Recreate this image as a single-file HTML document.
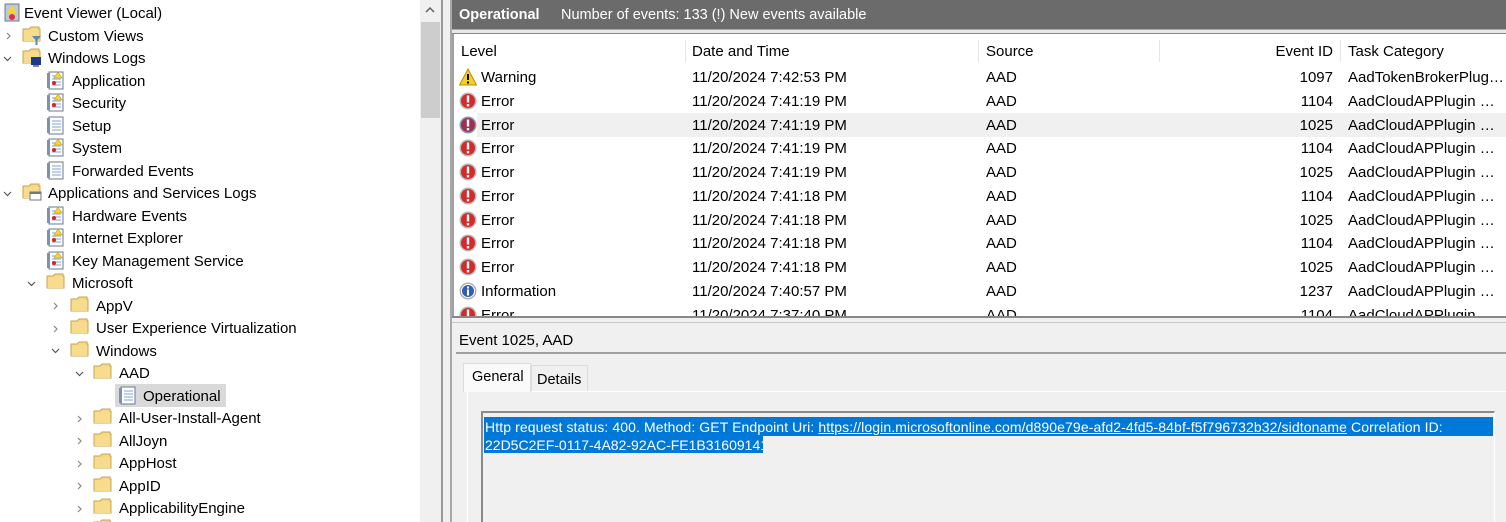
<!DOCTYPE html>
<html><head><meta charset="utf-8">
<style>
*{margin:0;padding:0;box-sizing:border-box}
body{width:1506px;height:522px;overflow:hidden;position:relative;background:#fff;font-family:"Liberation Sans",Arial,sans-serif;font-size:15px;color:#000}
.a{position:absolute;white-space:nowrap;padding-top:1px}
.t{position:absolute;white-space:nowrap;line-height:22px;height:23px;padding-top:1px}
.k{width:157px;overflow:hidden;text-overflow:ellipsis}
svg{position:absolute}
</style></head><body>

<!-- left tree -->
<div class="a" style="left:0;top:0;width:420px;height:522px;background:#fff"></div>
<div class="a" style="left:115px;top:384px;width:111px;height:23px;background:#d9d9d9"></div>
<!-- scrollbar -->
<div class="a" style="left:420px;top:0;width:21px;height:522px;background:#f0f0f0"></div>
<div class="a" style="left:421px;top:22px;width:19px;height:96px;background:#cdcdcd"></div>
<svg style="left:424px;top:5px" width="12" height="10"><polyline points="2,7 6,3 10,7" fill="none" stroke="#606060" stroke-width="1.5"/></svg>
<div class="a" style="left:441px;top:0;width:2px;height:522px;background:#9a9a9a"></div>
<div class="a" style="left:443px;top:0;width:9px;height:522px;background:#f0f0f0"></div>
<div class="a" style="left:450px;top:0;width:2px;height:522px;background:#a8a8a8"></div>

<svg width="0" height="0" style="position:absolute">
<defs>
<g id="fold"><path d="M1,3 h6 l2,-2 h8 v2 h1 v12 h-17z" fill="#f6d886" stroke="#c8a54c"/><rect x="1.5" y="4" width="16" height="11" fill="#f8dc8e"/></g>
<g id="log"><rect x="3" y="1" width="14" height="17" fill="#fff" stroke="#6a7a96"/><rect x="1" y="2" width="3" height="15" fill="#8090b0"/><line x1="6" y1="5" x2="15" y2="5" stroke="#7fa0d0"/><line x1="6" y1="8" x2="15" y2="8" stroke="#7fa0d0"/><line x1="6" y1="11" x2="15" y2="11" stroke="#7fa0d0"/><line x1="6" y1="14" x2="15" y2="14" stroke="#7fa0d0"/></g>
<g id="wlog"><use href="#log"/><path d="M12,1 l4,6 h-8z" fill="#f7d43a" stroke="#c9a000" stroke-width=".6"/><circle cx="8" cy="12" r="2" fill="#d22"/></g>
<g id="cr"><polyline points="2,2 5,5 2,8" fill="none" stroke="#888" stroke-width="1.2"/></g>
<g id="cd"><polyline points="1,3 4.5,6.5 8,3" fill="none" stroke="#555" stroke-width="1.2"/></g>
<g id="err"><circle cx="9" cy="9" r="8.5" fill="#b8b8b8"/><circle cx="9" cy="9" r="7" fill="#d42a2a"/><rect x="7.8" y="3.5" width="2.4" height="7" fill="#fff"/><rect x="7.8" y="12" width="2.4" height="2.4" fill="#fff"/></g>
<g id="errs"><circle cx="9" cy="9" r="8.5" fill="#8a9ab8"/><circle cx="9" cy="9" r="7" fill="#a03050"/><rect x="7.8" y="3.5" width="2.4" height="7" fill="#fff"/><rect x="7.8" y="12" width="2.4" height="2.4" fill="#fff"/></g>
<g id="wrn"><path d="M9,1 L17.5,17 H0.5Z" fill="#f5d020" stroke="#b89000"/><rect x="8" y="6" width="2" height="6" fill="#000"/><rect x="8" y="13.5" width="2" height="2" fill="#000"/></g>
<g id="inf"><circle cx="9" cy="9" r="8.5" fill="#b0b0b0"/><circle cx="9" cy="9" r="7" fill="#fff"/><circle cx="9" cy="9" r="6" fill="#3060b0"/><rect x="8" y="7.5" width="2" height="6" fill="#fff"/><rect x="8" y="4.5" width="2" height="2" fill="#fff"/></g>
</defs></svg>

<!-- tree rows -->
<svg style="left:2px;top:3px" width="20" height="20"><rect x="3" y="1" width="14" height="17" fill="#c0c8d8" stroke="#6a7a96"/><path d="M10,2 l5,8 h-10z" fill="#f7d43a"/><circle cx="10" cy="14" r="3" fill="#d33"/></svg>
<div class="t" style="left:24px;top:2px">Event Viewer (Local)</div>

<svg style="left:5px;top:31px" width="10" height="10"><use href="#cr"/></svg>
<svg style="left:22px;top:26px" width="20" height="20"><use href="#fold"/><path d="M10,10 h9 l-3.5,4 v5 h-2 v-5z" fill="#5a8ab0"/></svg>
<div class="t" style="left:48px;top:25px">Custom Views</div>

<svg style="left:3px;top:54px" width="10" height="10"><use href="#cd"/></svg>
<svg style="left:22px;top:48px" width="22" height="20"><use href="#fold"/><rect x="9" y="9" width="10" height="8" fill="#1a3a90"/><rect x="11" y="17" width="6" height="2" fill="#888"/></svg>
<div class="t" style="left:48px;top:47px">Windows Logs</div>

<svg style="left:46px;top:71px" width="20" height="20"><use href="#wlog"/></svg><div class="t" style="left:72px;top:70px">Application</div>
<svg style="left:46px;top:93px" width="20" height="20"><use href="#wlog"/></svg><div class="t" style="left:72px;top:92px">Security</div>
<svg style="left:46px;top:116px" width="20" height="20"><use href="#log"/></svg><div class="t" style="left:72px;top:115px">Setup</div>
<svg style="left:46px;top:138px" width="20" height="20"><use href="#wlog"/></svg><div class="t" style="left:72px;top:137px">System</div>
<svg style="left:46px;top:161px" width="20" height="20"><use href="#log"/></svg><div class="t" style="left:72px;top:160px">Forwarded Events</div>

<svg style="left:3px;top:189px" width="10" height="10"><use href="#cd"/></svg>
<svg style="left:22px;top:183px" width="22" height="20"><use href="#fold"/><rect x="8" y="9" width="11" height="8" fill="#fff" stroke="#777"/><rect x="8" y="9" width="11" height="2" fill="#777"/></svg>
<div class="t" style="left:48px;top:182px">Applications and Services Logs</div>

<svg style="left:46px;top:206px" width="20" height="20"><use href="#wlog"/></svg><div class="t" style="left:72px;top:205px">Hardware Events</div>
<svg style="left:46px;top:228px" width="20" height="20"><use href="#wlog"/></svg><div class="t" style="left:72px;top:227px">Internet Explorer</div>
<svg style="left:46px;top:251px" width="20" height="20"><use href="#wlog"/></svg><div class="t" style="left:72px;top:250px">Key Management Service</div>

<svg style="left:27px;top:279px" width="10" height="10"><use href="#cd"/></svg>
<svg style="left:46px;top:273px" width="20" height="20"><use href="#fold"/></svg><div class="t" style="left:72px;top:272px">Microsoft</div>

<svg style="left:52px;top:301px" width="10" height="10"><use href="#cr"/></svg>
<svg style="left:70px;top:296px" width="20" height="20"><use href="#fold"/></svg><div class="t" style="left:96px;top:295px">AppV</div>
<svg style="left:52px;top:324px" width="10" height="10"><use href="#cr"/></svg>
<svg style="left:70px;top:318px" width="20" height="20"><use href="#fold"/></svg><div class="t" style="left:96px;top:317px">User Experience Virtualization</div>
<svg style="left:51px;top:346px" width="10" height="10"><use href="#cd"/></svg>
<svg style="left:70px;top:341px" width="20" height="20"><use href="#fold"/></svg><div class="t" style="left:96px;top:340px">Windows</div>

<svg style="left:75px;top:369px" width="10" height="10"><use href="#cd"/></svg>
<svg style="left:93px;top:363px" width="20" height="20"><use href="#fold"/></svg><div class="t" style="left:119px;top:362px">AAD</div>
<svg style="left:118px;top:386px" width="20" height="20"><use href="#log"/></svg><div class="t" style="left:143px;top:385px">Operational</div>

<svg style="left:76px;top:414px" width="10" height="10"><use href="#cr"/></svg><svg style="left:93px;top:408px" width="20" height="20"><use href="#fold"/></svg><div class="t" style="left:119px;top:407px">All-User-Install-Agent</div>
<svg style="left:76px;top:436px" width="10" height="10"><use href="#cr"/></svg><svg style="left:93px;top:431px" width="20" height="20"><use href="#fold"/></svg><div class="t" style="left:119px;top:430px">AllJoyn</div>
<svg style="left:76px;top:459px" width="10" height="10"><use href="#cr"/></svg><svg style="left:93px;top:453px" width="20" height="20"><use href="#fold"/></svg><div class="t" style="left:119px;top:452px">AppHost</div>
<svg style="left:76px;top:481px" width="10" height="10"><use href="#cr"/></svg><svg style="left:93px;top:476px" width="20" height="20"><use href="#fold"/></svg><div class="t" style="left:119px;top:475px">AppID</div>
<svg style="left:76px;top:504px" width="10" height="10"><use href="#cr"/></svg><svg style="left:93px;top:498px" width="20" height="20"><use href="#fold"/></svg><div class="t" style="left:119px;top:497px">ApplicabilityEngine</div>
<svg style="left:93px;top:519px" width="20" height="3"><use href="#fold"/></svg>

<!-- right header bar -->
<div class="a" style="left:452px;top:0;width:1054px;height:29px;background:#6b6b6b"></div>
<div class="a" style="left:459px;top:6px;font-weight:bold;color:#fff;font-size:14.5px">Operational</div>
<div class="a" style="left:561px;top:6px;color:#fff;font-size:14.5px">Number of events: 133 (!) New events available</div>
<div class="a" style="left:452px;top:29px;width:1054px;height:5px;background:#e8e8e8;border-top:1px solid #aaa;border-bottom:1px solid #888;padding:0"></div>

<!-- list -->
<div class="a" style="left:452px;top:34px;width:1054px;height:283px;background:#fff;border-left:2px solid #a0a0a0"></div>
<div class="a" style="left:685px;top:40px;width:1px;height:22px;background:#e5e5e5"></div>
<div class="a" style="left:978px;top:40px;width:1px;height:22px;background:#e5e5e5"></div>
<div class="a" style="left:1159px;top:40px;width:1px;height:22px;background:#e5e5e5"></div>
<div class="a" style="left:1340px;top:40px;width:1px;height:22px;background:#e5e5e5"></div>
<div class="a" style="left:461px;top:42px">Level</div>
<div class="a" style="left:692px;top:42px">Date and Time</div>
<div class="a" style="left:986px;top:42px">Source</div>
<div class="a" style="left:1233px;top:42px;width:100px;text-align:right">Event ID</div>
<div class="a" style="left:1348px;top:42px">Task Category</div>

<div class="a" style="left:477px;top:113px;width:1029px;height:24px;background:#f0f0f0"></div>
<div class="a" style="left:452px;top:316px;width:1054px;height:2px;background:#888"></div>

<!-- rows -->
<svg style="left:459px;top:68px" width="18" height="18"><use href="#wrn"/></svg><div class="a" style="left:481px;top:68px">Warning</div><div class="a" style="left:692px;top:68px">11/20/2024 7:42:53 PM</div><div class="a" style="left:986px;top:68px">AAD</div><div class="a" style="left:1233px;top:68px;width:100px;text-align:right">1097</div><div class="a k" style="left:1348px;top:68px">AadTokenBrokerPlugin Operational</div>
<svg style="left:459px;top:92px" width="18" height="18"><use href="#err"/></svg><div class="a" style="left:481px;top:92px">Error</div><div class="a" style="left:692px;top:92px">11/20/2024 7:41:19 PM</div><div class="a" style="left:986px;top:92px">AAD</div><div class="a" style="left:1233px;top:92px;width:100px;text-align:right">1104</div><div class="a k" style="left:1348px;top:92px">AadCloudAPPlugin Operation</div>
<svg style="left:459px;top:116px" width="18" height="18"><use href="#errs"/></svg><div class="a" style="left:481px;top:116px">Error</div><div class="a" style="left:692px;top:116px">11/20/2024 7:41:19 PM</div><div class="a" style="left:986px;top:116px">AAD</div><div class="a" style="left:1233px;top:116px;width:100px;text-align:right">1025</div><div class="a k" style="left:1348px;top:116px">AadCloudAPPlugin Operation</div>
<svg style="left:459px;top:139px" width="18" height="18"><use href="#err"/></svg><div class="a" style="left:481px;top:139px">Error</div><div class="a" style="left:692px;top:139px">11/20/2024 7:41:19 PM</div><div class="a" style="left:986px;top:139px">AAD</div><div class="a" style="left:1233px;top:139px;width:100px;text-align:right">1104</div><div class="a k" style="left:1348px;top:139px">AadCloudAPPlugin Operation</div>
<svg style="left:459px;top:163px" width="18" height="18"><use href="#err"/></svg><div class="a" style="left:481px;top:163px">Error</div><div class="a" style="left:692px;top:163px">11/20/2024 7:41:19 PM</div><div class="a" style="left:986px;top:163px">AAD</div><div class="a" style="left:1233px;top:163px;width:100px;text-align:right">1025</div><div class="a k" style="left:1348px;top:163px">AadCloudAPPlugin Operation</div>
<svg style="left:459px;top:187px" width="18" height="18"><use href="#err"/></svg><div class="a" style="left:481px;top:187px">Error</div><div class="a" style="left:692px;top:187px">11/20/2024 7:41:18 PM</div><div class="a" style="left:986px;top:187px">AAD</div><div class="a" style="left:1233px;top:187px;width:100px;text-align:right">1104</div><div class="a k" style="left:1348px;top:187px">AadCloudAPPlugin Operation</div>
<svg style="left:459px;top:211px" width="18" height="18"><use href="#err"/></svg><div class="a" style="left:481px;top:211px">Error</div><div class="a" style="left:692px;top:211px">11/20/2024 7:41:18 PM</div><div class="a" style="left:986px;top:211px">AAD</div><div class="a" style="left:1233px;top:211px;width:100px;text-align:right">1025</div><div class="a k" style="left:1348px;top:211px">AadCloudAPPlugin Operation</div>
<svg style="left:459px;top:234px" width="18" height="18"><use href="#err"/></svg><div class="a" style="left:481px;top:234px">Error</div><div class="a" style="left:692px;top:234px">11/20/2024 7:41:18 PM</div><div class="a" style="left:986px;top:234px">AAD</div><div class="a" style="left:1233px;top:234px;width:100px;text-align:right">1104</div><div class="a k" style="left:1348px;top:234px">AadCloudAPPlugin Operation</div>
<svg style="left:459px;top:258px" width="18" height="18"><use href="#err"/></svg><div class="a" style="left:481px;top:258px">Error</div><div class="a" style="left:692px;top:258px">11/20/2024 7:41:18 PM</div><div class="a" style="left:986px;top:258px">AAD</div><div class="a" style="left:1233px;top:258px;width:100px;text-align:right">1025</div><div class="a k" style="left:1348px;top:258px">AadCloudAPPlugin Operation</div>
<svg style="left:459px;top:282px" width="18" height="18"><use href="#inf"/></svg><div class="a" style="left:481px;top:282px">Information</div><div class="a" style="left:692px;top:282px">11/20/2024 7:40:57 PM</div><div class="a" style="left:986px;top:282px">AAD</div><div class="a" style="left:1233px;top:282px;width:100px;text-align:right">1237</div><div class="a k" style="left:1348px;top:282px">AadCloudAPPlugin Operation</div>
<div class="a" style="left:452px;top:304px;width:1054px;height:12px;overflow:hidden;padding:0">
<svg style="left:7px;top:2px" width="18" height="18"><use href="#err"/></svg><div class="a" style="left:29px;top:2px">Error</div><div class="a" style="left:240px;top:2px">11/20/2024 7:37:40 PM</div><div class="a" style="left:534px;top:2px">AAD</div><div class="a" style="left:781px;top:2px;width:100px;text-align:right">1104</div><div class="a k" style="left:896px;top:2px">AadCloudAPPlugin Operation</div>
</div>

<!-- detail pane -->
<div class="a" style="left:452px;top:318px;width:1054px;height:204px;background:#f0f0f0"></div>
<div class="a" style="left:452px;top:322px;width:1054px;height:1px;background:#c8c8c8;padding:0"></div>
<div class="a" style="left:459px;top:331px">Event 1025, AAD</div>
<div class="a" style="left:456px;top:352px;width:1050px;height:2px;background:#a0a0a0;padding:0"></div>
<div class="a" style="left:467px;top:391px;width:1039px;height:131px;background:#f0f0f0;border-top:1px solid #fff;border-left:1px solid #fff"></div>
<div class="a" style="left:531px;top:365px;width:57px;height:26px;background:#f0f0f0;border:1px solid #dcdcdc;border-bottom:none"></div>
<div class="a" style="left:537px;top:371px;font-size:14.5px">Details</div>
<div class="a" style="left:463px;top:363px;width:68px;height:29px;background:#fafafa;border:1px solid #dcdcdc;border-bottom:none"></div>
<div class="a" style="left:472px;top:368px;font-size:14.5px">General</div>
<div class="a" style="left:481px;top:411px;width:1014px;height:111px;background:#f0f0f0;border-top:2px solid #8a8a8a;border-left:2px solid #8a8a8a;border-right:1px solid #fff"></div>
<div class="a" style="left:484px;top:417px;width:1009px;height:19px;background:#0078d7"></div>
<div class="a" style="left:484px;top:436px;width:279px;height:17px;background:#0078d7"></div>
<div class="a" style="left:485px;top:418px;color:#fff;font-size:14px;letter-spacing:0.1px">Http request status: 400. Method: GET Endpoint Uri: <span style="text-decoration:underline">https://login.microsoftonline.com/d890e79e-afd2-4fd5-84bf-f5f796732b32/sidtoname</span> Correlation ID:</div>
<div class="a" style="left:485px;top:436px;color:#fff;font-size:14px">22D5C2EF-0117-4A82-92AC-FE1B31609141</div>
</body></html>
